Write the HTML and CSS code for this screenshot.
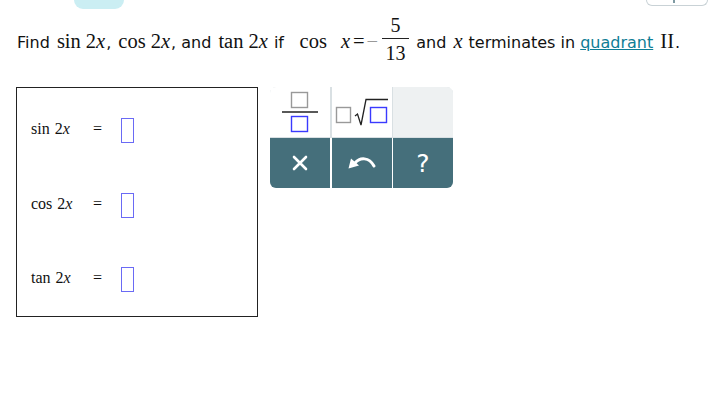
FILE: index.html
```html
<!DOCTYPE html>
<html>
<head>
<meta charset="utf-8">
<link rel="stylesheet" href="styles.css">
</head>
<body>
<div class="topbar">
  <div class="tab-left"></div>
  <div class="tab-right"><span class="tab-dot"></span></div>
</div>
<p class="question">Find <span class="m">sin<span class="sp"></span>2<i>x</i></span>, <span class="m">cos<span class="sp"></span>2<i>x</i></span>, and <span class="m">tan<span class="sp"></span>2<i>x</i></span> if <span class="m wide">cos<span class="sp2"></span><i>x</i><span class="eqs">=</span></span><span class="neg">&minus;</span><span class="frac"><span class="num">5</span><span class="den">13</span></span> and <span class="m"><i>x</i></span> terminates in <a class="link" href="#">quadrant</a> <span class="m">II</span>.</p>
<div class="work">
  <div class="answers">
    <div class="row"><span class="lbl">sin<span class="sp"></span>2<i>x</i></span><span class="eq">=</span><span class="inbox"></span></div>
    <div class="row"><span class="lbl">cos<span class="sp"></span>2<i>x</i></span><span class="eq">=</span><span class="inbox"></span></div>
    <div class="row"><span class="lbl">tan<span class="sp"></span>2<i>x</i></span><span class="eq">=</span><span class="inbox"></span></div>
  </div>
  <div class="keypad">
    <div class="key light">
      <svg class="ico-frac" width="38" height="42" viewBox="0 0 38 42">
        <rect x="10.5" y="1.5" width="16" height="15" fill="none" stroke="#999" stroke-width="1.4"/>
        <line x1="1" y1="21" x2="37" y2="21" stroke="#222" stroke-width="1.4"/>
        <rect x="10.5" y="25.5" width="16" height="15" fill="none" stroke="#3a3aff" stroke-width="1.4"/>
      </svg>
    </div>
    <div class="key light">
      <svg class="ico-sqrt" width="54" height="30" viewBox="0 0 54 30">
        <rect x="1.5" y="10.5" width="14" height="15" fill="none" stroke="#999" stroke-width="1.4"/>
        <path d="M20 19 L22.5 17 L26 28 L31 2.5 L53 2.5" fill="none" stroke="#222" stroke-width="1.3"/>
        <rect x="35.5" y="10.5" width="16" height="15" fill="none" stroke="#3a3aff" stroke-width="1.4"/>
      </svg>
    </div>
    <div class="key blank"></div>
    <div class="key dark">
      <svg width="16" height="16" viewBox="0 0 16 16">
        <path d="M2 2 L14 14 M14 2 L2 14" stroke="#fff" stroke-width="2.6" stroke-linecap="round"/>
      </svg>
    </div>
    <div class="key dark">
      <svg width="30" height="16" viewBox="0 0 30 16">
        <path d="M8 8 C13 2 22 2 27 11" fill="none" stroke="#fff" stroke-width="3" stroke-linecap="round"/>
        <path d="M1.5 13.5 L4 3.5 L12 10.5 Z" fill="#fff"/>
      </svg>
    </div>
    <div class="key dark"><span class="qmark">?</span></div>
  </div>
</div>
</body>
</html>
```
FILE: styles.css
```css
html, body {
  margin: 0;
  padding: 0;
  background: #fff;
}
body {
  font-family: "DejaVu Sans", Verdana, sans-serif;
  font-size: 16px;
  color: #111;
}
.topbar {
  display: flex;
  height: 8px;
  align-items: flex-start;
}
.tab-left {
  margin-left: 74px;
  width: 50px;
  height: 9px;
  background: #cbeef3;
  border-radius: 0 0 9px 9px;
}
.tab-right {
  margin-left: auto;
  margin-right: 17px;
  width: 60px;
  height: 5px;
  border: 1px solid #c9d2d6;
  border-top: none;
  border-radius: 0 0 8px 8px;
  display: flex;
  justify-content: center;
}
.tab-dot {
  width: 2px;
  height: 3px;
  background: #7e9aa3;
  margin-left: -6px;
}
.question {
  margin: 0;
  padding: 7px 0 0 17px;
  line-height: 20px;
  white-space: nowrap;
}
.m {
  font-family: "Liberation Serif", "Times New Roman", serif;
  font-size: 20.5px;
  margin-left: 2px;
  margin-right: 1px;
}
.m i, .lbl i {
  font-style: italic;
}
.sp {
  display: inline-block;
  width: 5px;
}
.sp2 {
  display: inline-block;
  width: 14px;
}
.wide {
  margin-left: 10.5px;
  margin-right: 0;
}
.eqs {
  margin-left: 3px;
}
.neg {
  color: #999;
  font-family: "Liberation Serif", serif;
  font-size: 20.5px;
  margin-left: 2px;
}
.frac {
  display: inline-flex;
  flex-direction: column;
  align-items: center;
  vertical-align: 16px;
  font-family: "Liberation Serif", "Times New Roman", serif;
  font-size: 20px;
  line-height: 1;
  margin: 0 2px 0 4px;
}
.num {
  padding: 0 7px 3px;
  border-bottom: 1px solid #222;
  width: 13px;
  text-align: center;
}
.den {
  padding-top: 4px;
}
.link {
  color: #0e7d95;
  text-decoration: underline;
}
.work {
  display: flex;
  align-items: flex-start;
  gap: 12px;
  padding-left: 16px;
  margin-top: 24px;
}
.answers {
  box-sizing: border-box;
  width: 242px;
  height: 230px;
  border: 1px solid #222;
  padding: 28px 0 0 14px;
}
.row {
  display: flex;
  align-items: flex-start;
  height: 74.5px;
  font-family: "Liberation Serif", "Times New Roman", serif;
  font-size: 16px;
}
.lbl {
  width: 62px;
  padding-top: 4px;
}
.eq {
  width: 28px;
  padding-top: 4px;
}
.inbox {
  box-sizing: border-box;
  width: 13px;
  height: 25px;
  border: 1.5px solid #6a6af5;
  margin-top: 2px;
}
.keypad {
  display: grid;
  grid-template-columns: 60px 60px 60px;
  grid-template-rows: 50px 50px;
  column-gap: 1.5px;
  row-gap: 1px;
  width: 183px;
  background: #fff;
  border-radius: 6px;
  overflow: hidden;
}
.key {
  display: flex;
  align-items: center;
  justify-content: center;
}
.light {
  background: #fff;
  box-shadow: 0 0 0 1px #d9e0e3;
}
.blank {
  background: #eef1f2;
  box-shadow: 0 0 0 1px #d9e0e3;
}
.dark {
  background: #456f7b;
}
.qmark {
  color: #fff;
  font-family: "DejaVu Sans", sans-serif;
  font-size: 25px;
  line-height: 1;
}
```
